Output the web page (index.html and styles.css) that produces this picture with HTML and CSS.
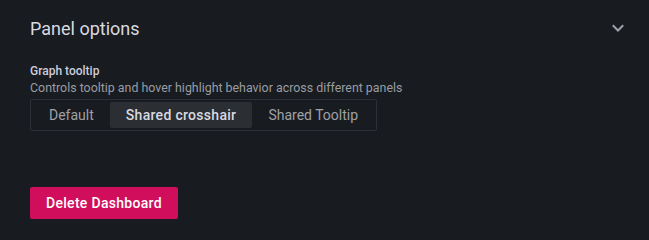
FILE: index.html
```html
<!DOCTYPE html>
<html>
<head>
<meta charset="utf-8">
<link rel="stylesheet" href="styles.css">
</head>
<body>
<div class="page">
  <div class="section-header">
    <h2 class="section-title">Panel options</h2>
    <svg class="chevron" width="16" height="16" viewBox="0 0 16 16"><path d="M3.5 6 L8 10.5 L12.5 6" fill="none" stroke="currentColor" stroke-width="2" stroke-linecap="square"/></svg>
  </div>
  <div class="field">
    <div class="field-label">Graph tooltip</div>
    <div class="field-desc">Controls tooltip and hover highlight behavior across different panels</div>
    <div class="radio-group">
      <button class="radio">Default</button>
      <button class="radio active">Shared crosshair</button>
      <button class="radio">Shared Tooltip</button>
    </div>
  </div>
  <button class="btn-destructive">Delete Dashboard</button>
</div>
</body>
</html>
```
FILE: styles.css
```css
html, body {
  margin: 0;
  padding: 0;
  background: #181b1f;
  font-family: Roboto, "Liberation Sans", sans-serif;
  color: #ccccdc;
}
.page {
  padding: 14px 23px 0 30px;
}
.section-header {
  display: flex;
  align-items: center;
  justify-content: space-between;
  height: 28px;
}
.section-title {
  margin: 0;
  font-size: 18px;
  font-weight: 400;
  color: #d8d9e0;
}
.chevron {
  color: #9fa1a8;
}
.field {
  margin-top: 21px;
}
.field-label {
  font-size: 12px;
  font-weight: 500;
  line-height: 16px;
  color: #ccccdc;
}
.field-desc {
  font-size: 12.4px;
  line-height: 18px;
  color: #9a9ba3;
}
.radio-group {
  display: inline-flex;
  margin-top: 2px;
  padding: 2px;
  border: 1px solid #2c2f35;
  border-radius: 2px;
}
.radio {
  height: 26px;
  padding: 0 16px;
  border: none;
  border-radius: 2px;
  background: transparent;
  font-family: inherit;
  font-size: 14px;
  font-weight: 400;
  color: #9fa1a8;
  cursor: pointer;
}
.radio.active {
  background: #2b2e33;
  color: #d8d9e0;
  font-weight: 500;
  letter-spacing: 0.3px;
}
.btn-destructive {
  display: block;
  margin-top: 56px;
  height: 32px;
  padding: 0 16px;
  border: none;
  border-radius: 2px;
  background: #d10e5c;
  color: #ffffff;
  font-family: inherit;
  font-size: 14px;
  font-weight: 500;
  letter-spacing: 0.3px;
}
```
